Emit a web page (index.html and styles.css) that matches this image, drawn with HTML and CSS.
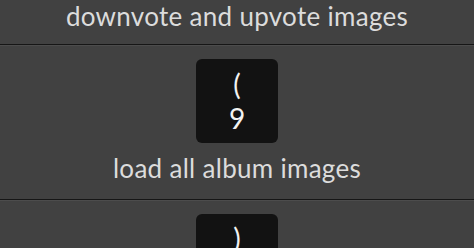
FILE: index.html
```html
<!DOCTYPE html>
<html>
<head>
<meta charset="utf-8">
<link rel="stylesheet" href="styles.css">
</head>
<body>
<div class="list">
  <div class="item first">
    <div class="label">downvote and upvote images</div>
  </div>
  <div class="item">
    <div class="key"><span>(</span><span>9</span></div>
    <div class="label">load all album images</div>
  </div>
  <div class="item">
    <div class="key"><span>)</span></div>
  </div>
</div>
</body>
</html>
```
FILE: styles.css
```css
html, body {
  margin: 0;
  padding: 0;
  background: #414141;
  overflow: hidden;
}
.list {
  display: flex;
  flex-direction: column;
  width: 474px;
  font-family: "Lato", "DejaVu Sans", sans-serif;
  font-weight: 400;
  color: #dcdcdc;
}
.item {
  display: flex;
  flex-direction: column;
  align-items: center;
  border-bottom: 1px solid #161616;
  box-shadow: 0 1px 0 #4c4c4c;
  margin-bottom: 1px;
  padding-top: 13px;
  padding-bottom: 15px;
}
.item.first {
  padding-top: 0;
  padding-bottom: 12px;
}
.label {
  font-size: 26px;
  line-height: 32px;
  letter-spacing: 0.3px;
  margin-top: 9px;
}
.first .label {
  margin-top: 0;
}
.key {
  width: 82px;
  height: 84px;
  background: #121212;
  border-radius: 6px;
  display: flex;
  flex-direction: column;
  justify-content: center;
  align-items: center;
  font-size: 28px;
  line-height: 34px;
  color: #f2f2f2;
}
.item:last-child .key {
  justify-content: flex-start;
  padding-top: 7px;
  box-sizing: border-box;
}
```
